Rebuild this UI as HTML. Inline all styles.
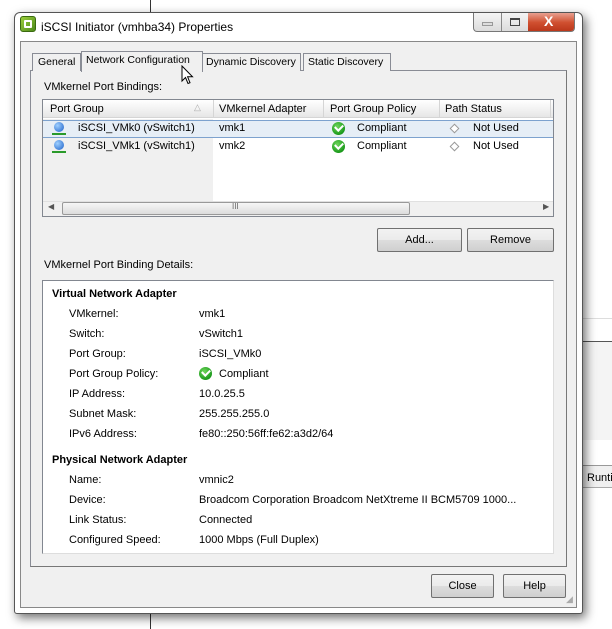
<!DOCTYPE html>
<html><head><style>
*{margin:0;padding:0;box-sizing:border-box}
body{width:612px;height:629px;background:#fff;position:relative;overflow:hidden;font-family:"Liberation Sans",sans-serif;font-size:11px;color:#000}
.a{position:absolute}
.t{position:absolute;white-space:nowrap}
.btn{position:absolute;border:1px solid #707070;border-radius:2px;background:linear-gradient(#f2f2f2,#ebebeb 50%,#dddddd 51%,#cfcfcf);text-align:center;font-size:11px}
.chk{position:absolute;width:13px;height:13px;border-radius:50%;background:radial-gradient(circle at 40% 35%,#6fd65c,#1b9a1b 70%,#0e6b0e)}
.chk:after{content:"";position:absolute;left:3px;top:2px;width:6px;height:4px;border-left:2px solid #fff;border-bottom:2px solid #fff;transform:rotate(-45deg)}
.dia{position:absolute;width:7px;height:7px;border:1px solid #999;transform:rotate(45deg);background:#fff}
.net{position:absolute;width:14px;height:14px}
.lbl{left:69px}
.val{left:199px}
.tab{font-size:10.5px}
</style></head><body>
<div class="a" style="left:150px;top:0;width:1px;height:14px;background:#333"></div>
<div class="a" style="left:150px;top:612px;width:1px;height:17px;background:#333"></div>
<div class="a" style="left:582px;top:318px;width:30px;height:1px;background:#ddd"></div>
<div class="a" style="left:582px;top:341px;width:30px;height:1px;background:#555"></div>
<div class="a" style="left:582px;top:342px;width:30px;height:98px;background:#f4f4f4"></div>
<div class="a" style="left:582px;top:465px;width:30px;height:1px;background:#999"></div>
<div class="a" style="left:582px;top:466px;width:30px;height:22px;background:#f0f0f0;border-bottom:1px solid #aaa"></div>
<div class="t" style="left:587px;top:472px">Runti</div>
<div class="a" style="left:14px;top:12px;width:569px;height:602px;border:1px solid #555;border-radius:6px 6px 3px 3px;background:#fff;box-shadow:3px 4px 10px rgba(0,0,0,.55)"></div>
<div class="a" style="left:20px;top:16px;width:16px;height:16px;border-radius:3px;background:linear-gradient(135deg,#9ccf3c,#4d8a1a);border:1px solid #3a6a10"></div>
<div class="a" style="left:24px;top:20px;width:8px;height:8px;border:2px solid #fff;border-radius:1px"></div>
<div class="t" style="left:41px;top:20px;font-size:12px">iSCSI Initiator (vmhba34) Properties</div>
<div class="a" style="left:473px;top:13px;width:102px;height:19px;border:1px solid #777;border-top:none;border-radius:0 0 4px 4px;overflow:hidden;background:linear-gradient(#f4f4f4,#dcdcdc)">
 <div class="a" style="left:27px;top:0;width:1px;height:19px;background:#888"></div>
 <div class="a" style="left:54px;top:0;width:47px;height:19px;background:linear-gradient(#e8a090,#d05030 50%,#b83418)"></div>
 <div class="a" style="left:8px;top:9px;width:11px;height:4px;border:1px solid #999;background:#ddd"></div>
 <div class="a" style="left:36px;top:5px;width:10px;height:8px;border:1px solid #444;border-top-width:2px"></div>
 <div class="t" style="left:70px;top:0px;color:#fff;font-weight:bold;font-size:14px">X</div>
</div>
<div class="a" style="left:20px;top:41px;width:557px;height:567px;background:#f0f0f0;border:1px solid #888"></div>
<div class="a" style="left:30px;top:70px;width:537px;height:497px;border:1px solid #898c95;background:#f0f0f0;border-right-color:#777;border-bottom-color:#777"></div>
<div class="a" style="left:32px;top:53px;width:49px;height:18px;border:1px solid #898c95;border-bottom:none;background:#f0f0f0"></div>
<div class="t tab" style="left:38px;top:56px">General</div>
<div class="a" style="left:202px;top:53px;width:99px;height:18px;border:1px solid #898c95;border-bottom:none;background:#f0f0f0"></div>
<div class="t tab" style="left:206px;top:56px">Dynamic Discovery</div>
<div class="a" style="left:303px;top:53px;width:88px;height:18px;border:1px solid #898c95;border-bottom:none;background:#f0f0f0"></div>
<div class="t tab" style="left:308px;top:56px">Static Discovery</div>
<div class="a" style="left:81px;top:51px;width:122px;height:21px;border:1px solid #898c95;border-bottom:none;background:#f0f0f0"></div>
<div class="t tab" style="left:86px;top:54px">Network Configuration</div>
<svg class="a" style="left:181px;top:65px" width="14" height="22" viewBox="0 0 14 22"><path d="M1 1 L1 16 L4.5 12.5 L7 18.5 L9 17.7 L6.6 11.8 L11.5 11.8 Z" fill="#fff" stroke="#000" stroke-width="1"/></svg>
<div class="t" style="left:44px;top:81px">VMkernel Port Bindings:</div>
<div class="a" style="left:42px;top:99px;width:512px;height:118px;border:1px solid #828790;background:#fff;overflow:hidden">
 <div class="a" style="left:0;top:0;width:510px;height:18px;background:linear-gradient(#fff,#f3f3f3 50%,#e6e6e6);border-bottom:1px solid #d5d5d5"></div>
 <div class="a" style="left:170px;top:0;width:1px;height:18px;background:#d5d5d5"></div>
 <div class="a" style="left:280px;top:0;width:1px;height:18px;background:#d5d5d5"></div>
 <div class="a" style="left:396px;top:0;width:1px;height:18px;background:#d5d5d5"></div>
 <div class="a" style="left:507px;top:0;width:1px;height:18px;background:#d5d5d5"></div>
 <div class="t" style="left:7px;top:3px">Port Group</div>
 <div class="t" style="left:151px;top:2px;color:#aaa;font-size:9px">△</div>
 <div class="t" style="left:176px;top:3px">VMkernel Adapter</div>
 <div class="t" style="left:287px;top:3px">Port Group Policy</div>
 <div class="t" style="left:402px;top:3px">Path Status</div>
 <div class="a" style="left:0;top:19px;width:170px;height:82px;background:#f0f0f0"></div>
 <div class="a" style="left:0;top:20px;width:510px;height:18px;background:#e6eef6;border-top:1px solid #7da2ce;border-bottom:1px solid #7da2ce"></div>
 <div class="t" style="left:35px;top:22px">iSCSI_VMk0 (vSwitch1)</div>
 <div class="t" style="left:176px;top:22px">vmk1</div>
 <div class="t" style="left:314px;top:22px">Compliant</div>
 <div class="t" style="left:430px;top:22px">Not Used</div>
 <div class="t" style="left:35px;top:40px">iSCSI_VMk1 (vSwitch1)</div>
 <div class="t" style="left:176px;top:40px">vmk2</div>
 <div class="t" style="left:314px;top:40px">Compliant</div>
 <div class="t" style="left:430px;top:40px">Not Used</div>
 <div class="chk" style="left:289px;top:22px"></div>
 <div class="chk" style="left:289px;top:40px"></div>
 <div class="dia" style="left:408px;top:25px"></div>
 <div class="dia" style="left:408px;top:43px"></div>
 <div class="net" style="left:9px;top:22px"><div class="a" style="left:2px;top:0;width:10px;height:10px;border-radius:50%;background:radial-gradient(circle at 35% 35%,#9fd0ff,#1a5fc8)"></div><div class="a" style="left:0;top:11px;width:14px;height:2px;background:#2a9a2a"></div></div>
 <div class="net" style="left:9px;top:40px"><div class="a" style="left:2px;top:0;width:10px;height:10px;border-radius:50%;background:radial-gradient(circle at 35% 35%,#9fd0ff,#1a5fc8)"></div><div class="a" style="left:0;top:11px;width:14px;height:2px;background:#2a9a2a"></div></div>
 <div class="a" style="left:0;top:101px;width:510px;height:15px;background:#f0f0f0;border-top:1px solid #e0e0e0"></div>
 <div class="t" style="left:5px;top:102px;font-size:8px;color:#555">◀</div>
 <div class="t" style="left:500px;top:102px;font-size:8px;color:#555">▶</div>
 <div class="a" style="left:19px;top:102px;width:348px;height:13px;border:1px solid #999;border-radius:2px;background:linear-gradient(#f6f6f6,#dcdcdc)"></div>
 <div class="t" style="left:189px;top:102px;font-size:8px;color:#666">III</div>
</div>
<div class="btn" style="left:377px;top:228px;width:85px;height:24px;line-height:22px">Add...</div>
<div class="btn" style="left:467px;top:228px;width:87px;height:24px;line-height:22px">Remove</div>
<div class="t" style="left:44px;top:259px">VMkernel Port Binding Details:</div>
<div class="a" style="left:42px;top:280px;width:512px;height:274px;border:1px solid #828790;border-right-color:#ddd;border-bottom-color:#ddd;background:#fff"></div>
<div class="t" style="left:52px;top:288px;font-weight:bold">Virtual Network Adapter</div>
<div class="t lbl" style="top:308px">VMkernel:</div><div class="t val" style="top:308px">vmk1</div>
<div class="t lbl" style="top:328px">Switch:</div><div class="t val" style="top:328px">vSwitch1</div>
<div class="t lbl" style="top:348px">Port Group:</div><div class="t val" style="top:348px">iSCSI_VMk0</div>
<div class="t lbl" style="top:368px">Port Group Policy:</div><div class="chk" style="left:199px;top:367px"></div><div class="t" style="left:219px;top:368px">Compliant</div>
<div class="t lbl" style="top:388px">IP Address:</div><div class="t val" style="top:388px">10.0.25.5</div>
<div class="t lbl" style="top:408px">Subnet Mask:</div><div class="t val" style="top:408px">255.255.255.0</div>
<div class="t lbl" style="top:428px">IPv6 Address:</div><div class="t val" style="top:428px">fe80::250:56ff:fe62:a3d2/64</div>
<div class="t" style="left:52px;top:454px;font-weight:bold">Physical Network Adapter</div>
<div class="t lbl" style="top:474px">Name:</div><div class="t val" style="top:474px">vmnic2</div>
<div class="t lbl" style="top:494px">Device:</div><div class="t val" style="top:494px">Broadcom Corporation Broadcom NetXtreme II BCM5709 1000...</div>
<div class="t lbl" style="top:514px">Link Status:</div><div class="t val" style="top:514px">Connected</div>
<div class="t lbl" style="top:534px">Configured Speed:</div><div class="t val" style="top:534px">1000 Mbps (Full Duplex)</div>
<div class="btn" style="left:431px;top:574px;width:63px;height:24px;line-height:22px">Close</div>
<div class="btn" style="left:503px;top:574px;width:63px;height:24px;line-height:22px">Help</div>
<div class="t" style="left:566px;top:594px;font-size:9px;color:#aaa">◢</div>
</body></html>
